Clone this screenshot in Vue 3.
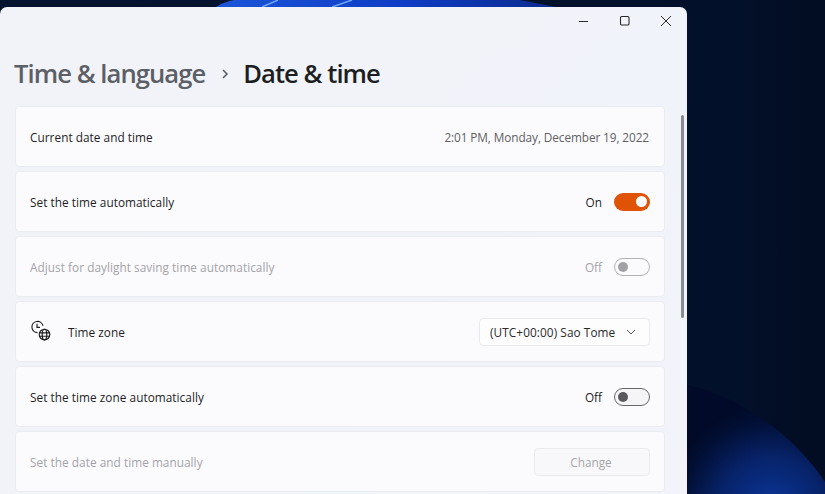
<script setup>
</script>

<template>
  <div class="desk">
    <svg class="wall" width="825" height="494" viewBox="0 0 825 494">
      <defs>
        <linearGradient id="bg" x1="0" y1="0" x2="1" y2="0">
          <stop offset="0" stop-color="#05132f" />
          <stop offset="0.9" stop-color="#031029" />
          <stop offset="1" stop-color="#020c22" />
        </linearGradient>
        <linearGradient id="top" x1="0" y1="0" x2="1" y2="0">
          <stop offset="0" stop-color="#1a55d8" />
          <stop offset="0.55" stop-color="#0f3cc6" />
          <stop offset="1" stop-color="#0a2a8c" />
        </linearGradient>
        <radialGradient id="blue" gradientUnits="userSpaceOnUse" cx="772" cy="510" r="105">
          <stop offset="0" stop-color="#0b379c" />
          <stop offset="0.5" stop-color="#07236a" />
          <stop offset="0.85" stop-color="#020f35" />
          <stop offset="1" stop-color="#010a28" />
        </radialGradient>
      </defs>
      <rect width="825" height="494" fill="url(#bg)" />
      <path d="M216 7 C222 3 228 1 234 0 L520 0 L556 7 Z" fill="url(#top)" />
      <path d="M262 7 L278 0 M332 7 L352 0" stroke="#6fa4f2" stroke-width="1.5" fill="none" />
      <path d="M687 385 C735 395 790 430 825 482 L825 494 L687 494 Z" fill="url(#blue)" />
    </svg>

    <main class="window">
      <div class="titlebar">
        <svg class="cap" width="12" height="12" viewBox="0 0 12 12"><path d="M1 6.5H10" stroke="#2b2b2b" stroke-width="1.1" fill="none" /></svg>
        <svg class="cap" width="12" height="12" viewBox="0 0 12 12"><rect x="1.5" y="1.5" width="8.5" height="8.5" rx="1.3" stroke="#2b2b2b" stroke-width="1.1" fill="none" /></svg>
        <svg class="cap" width="12" height="12" viewBox="0 0 12 12"><path d="M1 1L11 11M11 1L1 11" stroke="#2b2b2b" stroke-width="1" fill="none" /></svg>
      </div>

      <h1 class="crumbs">
        <span class="parent">Time &amp; language</span>
        <svg class="sep" width="10" height="12" viewBox="0 0 10 12"><path d="M3 2L7 6L3 10" stroke="#555a63" stroke-width="1.5" fill="none" /></svg>
        <span class="current">Date &amp; time</span>
      </h1>

      <div class="list">
        <section class="card">
          <span class="label">Current date and time</span>
          <span class="value">2:01 PM, Monday, December 19, 2022</span>
        </section>

        <section class="card">
          <span class="label">Set the time automatically</span>
          <div class="control">
            <span class="state">On</span>
            <span class="switch on"><i></i></span>
          </div>
        </section>

        <section class="card muted">
          <span class="label">Adjust for daylight saving time automatically</span>
          <div class="control">
            <span class="state">Off</span>
            <span class="switch off"><i></i></span>
          </div>
        </section>

        <section class="card">
          <div class="with-icon">
            <svg width="22" height="22" viewBox="0 0 22 22" fill="none" stroke="#1c1c1c" stroke-width="1.15">
              <path d="M7.5 12.6A5.6 5.6 0 1 1 13 5.8" />
              <path d="M7 3.8V7.3H10" />
              <circle cx="14.5" cy="14.5" r="5.3" />
              <ellipse cx="14.5" cy="14.5" rx="2.3" ry="5.3" />
              <path d="M9.4 12.8H19.6M9.4 16.2H19.6" />
            </svg>
            <span class="label">Time zone</span>
          </div>
          <div class="select">
            <span>(UTC+00:00) Sao Tome</span>
            <svg width="10" height="10" viewBox="0 0 10 10"><path d="M1 3L5 7L9 3" stroke="#555" stroke-width="1" fill="none" /></svg>
          </div>
        </section>

        <section class="card">
          <span class="label">Set the time zone automatically</span>
          <div class="control">
            <span class="state">Off</span>
            <span class="switch off dark"><i></i></span>
          </div>
        </section>

        <section class="card muted">
          <span class="label">Set the date and time manually</span>
          <button class="btn" disabled>Change</button>
        </section>
      </div>

      <div class="scrollbar"></div>
    </main>
  </div>
</template>

<style>
html, body { margin: 0; padding: 0; overflow: hidden; }
</style>

<style scoped>
.desk {
  position: relative;
  width: 825px;
  height: 494px;
  overflow: hidden;
  padding-top: 7px;
  box-sizing: border-box;
  font-family: "Open Sans", "Noto Sans", sans-serif;
}
.wall { position: absolute; inset: 0; }
.window {
  position: relative;
  width: 687px;
  height: 487px;
  background: linear-gradient(135deg, #f2f3f8, #f1f3fa 60%, #f3f4fb);
  border-radius: 7px 7px 0 0;
  padding: 0 22px 0 15px;
  box-sizing: border-box;
  overflow: hidden;
}
.titlebar {
  display: flex;
  justify-content: flex-end;
  gap: 29px;
  height: 14px;
  padding: 8px 0 0;
  margin-right: -7px;
}
.cap { display: block; flex: none; }
.crumbs {
  display: flex;
  align-items: center;
  margin: 25px 0 0 -1px;
  height: 40px;
  font-size: 25.6px;
  font-weight: 600;
  line-height: 40px;
}
.parent { color: #5c5f66; letter-spacing: -0.95px; }
.current { color: #1c1e22; letter-spacing: -0.95px; }
.sep { margin: 0 13px 0 15px; flex: none; }
.list {
  display: flex;
  flex-direction: column;
  gap: 4px;
  margin-top: 12px;
}
.card {
  height: 61px;
  box-sizing: border-box;
  display: flex;
  align-items: center;
  justify-content: space-between;
  padding: 0 14px;
  background: #fbfbfe;
  border: 1px solid #ebecf0;
  border-radius: 4px;
  font-size: 11.8px;
  color: #1e1e1e;
}
.label { letter-spacing: 0.04px; }
.value { color: #5f5f5f; margin-right: 1px; letter-spacing: -0.09px; }
.muted { color: #a3a3a6; }
.control { display: flex; align-items: center; gap: 12px; }
.switch {
  width: 36px;
  height: 18px;
  box-sizing: border-box;
  border-radius: 9px;
  display: flex;
  align-items: center;
  padding: 0 3px;
}
.switch i { display: block; width: 10px; height: 10px; border-radius: 50%; }
.switch.on { background: #e05206; justify-content: flex-end; }
.switch.on i { background: #fff; width: 11px; height: 11px; }
.switch.off { border: 1px solid #b0b1b5; background: #fbfbfd; }
.switch.off i { background: #a2a2a6; }
.switch.dark { border-color: #66676b; background: #f5f5f8; }
.switch.dark i { background: #5a5a5e; }
.with-icon { display: flex; align-items: center; gap: 16px; }
.with-icon svg { flex: none; margin-top: -1px; }
.select {
  width: 171px;
  height: 28px;
  box-sizing: border-box;
  display: flex;
  align-items: center;
  justify-content: space-between;
  padding: 0 13px 0 10px;
  background: #fdfdfe;
  border: 1px solid #e8e9ec;
  border-radius: 4px;
  color: #2a2a2a;
  letter-spacing: 0.08px;
}
.btn {
  width: 116px;
  height: 28px;
  padding: 0 2px 0 0;
  font: inherit;
  color: #a5a5a8;
  background: #f8f8fb;
  border: 1px solid #eaebee;
  border-radius: 4px;
}
.scrollbar {
  position: absolute;
  left: 681px;
  top: 108px;
  width: 3px;
  height: 203px;
  border-radius: 2px;
  background: #8a8c92;
}
</style>
